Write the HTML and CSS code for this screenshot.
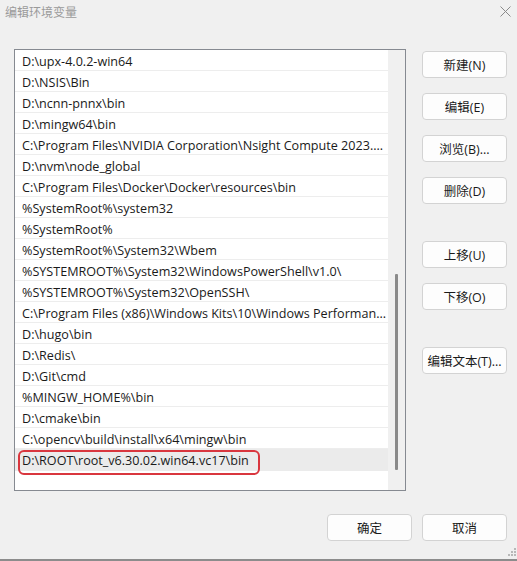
FILE: index.html
```html
<!DOCTYPE html>
<html lang="zh-CN">
<head>
<meta charset="utf-8">
<title>编辑环境变量</title>
<link rel="stylesheet" href="styles.css">
</head>
<body>
<div class="window">
  <div class="titlebar">
    <span class="title">编辑环境变量</span>
    <span class="close">
      <svg width="11" height="11" viewBox="0 0 11 11"><path d="M0.5 0.5 L10.5 10.5 M10.5 0.5 L0.5 10.5" stroke="#8a8a8a" stroke-width="1" fill="none"/></svg>
    </span>
  </div>
  <div class="content">
    <div class="listbox">
      <div class="items">
        <div class="row">D:\upx-4.0.2-win64</div>
        <div class="row">D:\NSIS\Bin</div>
        <div class="row">D:\ncnn-pnnx\bin</div>
        <div class="row">D:\mingw64\bin</div>
        <div class="row">C:\Program Files\NVIDIA Corporation\Nsight Compute 2023....</div>
        <div class="row">D:\nvm\node_global</div>
        <div class="row">C:\Program Files\Docker\Docker\resources\bin</div>
        <div class="row">%SystemRoot%\system32</div>
        <div class="row">%SystemRoot%</div>
        <div class="row">%SystemRoot%\System32\Wbem</div>
        <div class="row">%SYSTEMROOT%\System32\WindowsPowerShell\v1.0\</div>
        <div class="row">%SYSTEMROOT%\System32\OpenSSH\</div>
        <div class="row">C:\Program Files (x86)\Windows Kits\10\Windows Performan...</div>
        <div class="row">D:\hugo\bin</div>
        <div class="row">D:\Redis\</div>
        <div class="row">D:\Git\cmd</div>
        <div class="row">%MINGW_HOME%\bin</div>
        <div class="row">D:\cmake\bin</div>
        <div class="row">C:\opencv\build\install\x64\mingw\bin</div>
        <div class="row selected">D:\ROOT\root_v6.30.02.win64.vc17\bin<span class="mark"></span></div>
      </div>
      <div class="scrolltrack"><div class="thumb"></div></div>
    </div>
    <div class="buttons">
      <button class="btn">新建(N)</button>
      <button class="btn">编辑(E)</button>
      <button class="btn">浏览(B)...</button>
      <button class="btn">删除(D)</button>
      <button class="btn gap-lg">上移(U)</button>
      <button class="btn">下移(O)</button>
      <button class="btn gap-lg">编辑文本(T)...</button>
    </div>
  </div>
  <div class="footer">
    <button class="btn">确定</button>
    <button class="btn">取消</button>
    <span class="grip">
      <svg width="10" height="10" viewBox="0 0 10 10" fill="#b8b8b8">
        <rect x="8" y="0" width="2" height="2"/>
        <rect x="5" y="3" width="2" height="2"/><rect x="8" y="3" width="2" height="2"/>
        <rect x="2" y="6" width="2" height="2"/><rect x="5" y="6" width="2" height="2"/><rect x="8" y="6" width="2" height="2"/>
      </svg>
    </span>
  </div>
</div>
</body>
</html>
```
FILE: styles.css
```css
html, body {
  margin: 0;
  padding: 0;
  background: #f0f0f0;
}
body {
  font-family: "Open Sans", "Noto Sans CJK SC", sans-serif;
  font-size: 12px;
  color: #1a1a1a;
}
.window {
  width: 517px;
  height: 561px;
  box-sizing: border-box;
  display: flex;
  flex-direction: column;
  position: relative;
  border-bottom: 2px solid #8c8c8c;
}
.titlebar {
  height: 49px;
  display: flex;
  justify-content: space-between;
  align-items: flex-start;
  padding: 3px 6px 0 5px;
  box-sizing: border-box;
}
.title {
  font-family: "Noto Sans CJK SC", sans-serif;
  font-size: 12px;
  line-height: 18px;
  color: #9a9a9a;
}
.close {
  margin-top: 3px;
  display: block;
  height: 11px;
}
.close svg { display: block; }
.content {
  display: flex;
  padding-left: 14px;
  gap: 16px;
}
.listbox {
  width: 392px;
  height: 442px;
  box-sizing: border-box;
  border: 1px solid #868a91;
  background: #fff;
  display: flex;
}
.items {
  flex: 1;
  min-width: 0;
}
.row {
  height: 21px;
  box-sizing: border-box;
  border-bottom: 1px solid #ededed;
  padding: 2px 0 0 7px;
  font-size: 12.6px;
  line-height: 19px;
  white-space: nowrap;
  overflow: hidden;
  position: relative;
}
.row.selected {
  background: #ebebeb;
  border-bottom: none;
  height: 22px;
  overflow: visible;
}
.mark {
  position: absolute;
  left: 3px;
  top: 1px;
  width: 242px;
  height: 25px;
  box-sizing: border-box;
  border: 2px solid #d9363e;
  border-radius: 6px;
}
.scrolltrack {
  width: 17px;
  background: #f0f0f0;
  display: flex;
  justify-content: center;
}
.thumb {
  width: 3px;
  height: 196px;
  margin-top: 224px;
  background: #8a8a8a;
  border-radius: 1px;
}
.buttons {
  display: flex;
  flex-direction: column;
  padding-top: 2px;
  gap: 15px;
}
.btn {
  width: 85px;
  height: 27px;
  box-sizing: border-box;
  background: #fdfdfd;
  border: 1px solid #d3d3d3;
  border-radius: 4px;
  font-family: "Open Sans", "Noto Sans CJK SC", sans-serif;
  font-size: 12.5px;
  color: #1a1a1a;
  padding: 0;
  margin: 0;
}
.buttons .gap-lg {
  margin-top: 22px;
}
.footer {
  display: flex;
  justify-content: flex-end;
  gap: 10px;
  padding: 23px 10px 0 0;
  position: relative;
  flex: 1;
}
.grip {
  position: absolute;
  right: 1px;
  bottom: 1px;
  height: 10px;
}
.grip svg { display: block; }
```
